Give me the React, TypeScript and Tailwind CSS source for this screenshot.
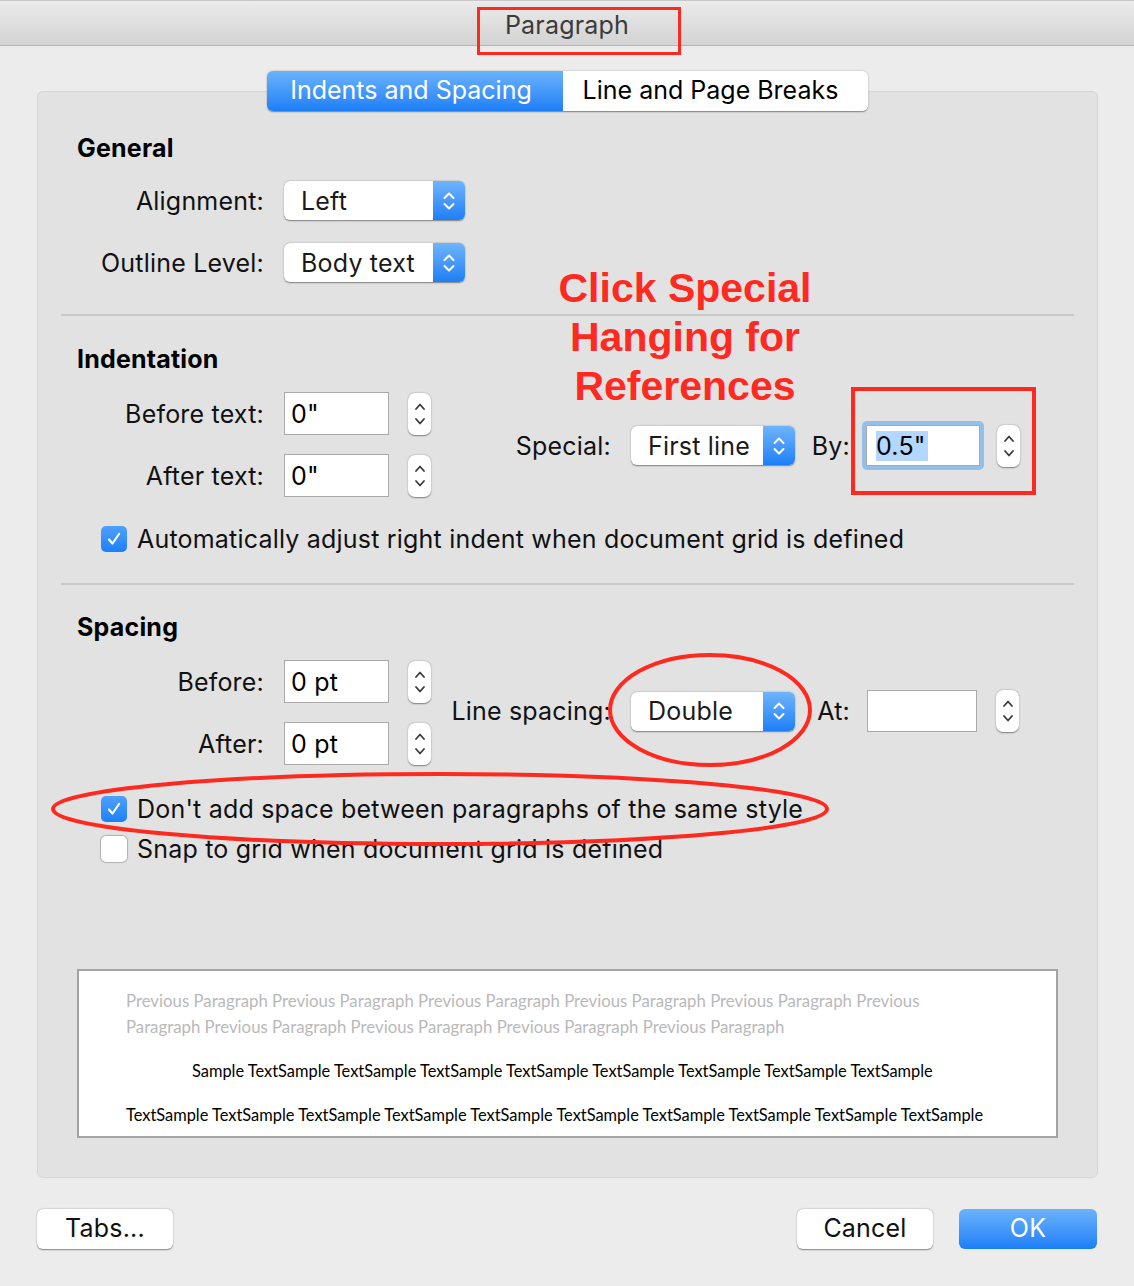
import React from "react";

const RED = "#ff2a1f";

function PopChevrons() {
  return (
    <svg width="14" height="24" viewBox="0 0 14 24" fill="none">
      <path d="M2.5 9 L7 4.5 L11.5 9" stroke="white" strokeWidth="2" strokeLinecap="round" strokeLinejoin="round" />
      <path d="M2.5 15 L7 19.5 L11.5 15" stroke="white" strokeWidth="2" strokeLinecap="round" strokeLinejoin="round" />
    </svg>
  );
}

function Popup({ value, width }: { value: string; width: string }) {
  return (
    <div className={`flex h-[39px] ${width} rounded-[6px] bg-white shadow-[0_0.5px_1.5px_rgba(0,0,0,0.45)] overflow-hidden`}>
      <div className="flex-1 flex items-center pl-[17px] text-[25px] leading-[30px] text-[#1a1a1a]">{value}</div>
      <div className="w-[32px] flex items-center justify-center bg-gradient-to-b from-[#6db4fb] to-[#1b7ef7]">
        <PopChevrons />
      </div>
    </div>
  );
}

function Stepper() {
  return (
    <div className="w-[23px] h-[42px] rounded-[7px] bg-white shadow-[0_0.5px_1.5px_rgba(0,0,0,0.45)] flex items-center justify-center">
      <svg width="12" height="30" viewBox="0 0 12 30" fill="none">
        <path d="M2 10 L6 5.5 L10 10" stroke="#3a3a3a" strokeWidth="1.8" strokeLinecap="round" strokeLinejoin="round" />
        <path d="M2 20 L6 24.5 L10 20" stroke="#3a3a3a" strokeWidth="1.8" strokeLinecap="round" strokeLinejoin="round" />
      </svg>
    </div>
  );
}

function Field({ value }: { value: string }) {
  return (
    <div className="w-[105px] h-[43px] bg-white border border-[#a9a9a9] flex items-center pl-[6px] text-[25px] leading-[30px] text-black">
      {value}
    </div>
  );
}

function FieldRow({ label, value }: { label: string; value: string }) {
  return (
    <div className="flex items-center">
      <div className="w-[226px] text-right text-[25px] leading-[30px] text-[#111] whitespace-nowrap">{label}</div>
      <div className="ml-[20px]">
        <Field value={value} />
      </div>
      <div className="ml-[19px]">
        <Stepper />
      </div>
    </div>
  );
}

function Checkbox({ checked }: { checked: boolean }) {
  return checked ? (
    <div className="w-[26px] h-[26px] rounded-[5px] bg-gradient-to-b from-[#4ea1fc] to-[#1a7ff8] flex items-center justify-center">
      <svg width="16" height="16" viewBox="0 0 16 16" fill="none">
        <path d="M3 8.5 L6.5 12.5 L13 3" stroke="white" strokeWidth="2.2" strokeLinecap="round" strokeLinejoin="round" />
      </svg>
    </div>
  ) : (
    <div className="w-[26px] h-[26px] rounded-[5px] bg-white shadow-[0_0_1px_1px_rgba(0,0,0,0.22)]" />
  );
}

function Button({ label, primary }: { label: string; primary?: boolean }) {
  return primary ? (
    <div className="w-[138px] h-[40px] rounded-[6px] bg-gradient-to-b from-[#6ab2fb] to-[#1a7ef7] flex items-center justify-center text-[25px] text-white">
      {label}
    </div>
  ) : (
    <div className="w-[136px] h-[40px] rounded-[6px] bg-white shadow-[0_0.5px_1.5px_rgba(0,0,0,0.45)] flex items-center justify-center text-[25px] text-[#111]">
      {label}
    </div>
  );
}

export default function App() {
  const prev1 = "Previous Paragraph Previous Paragraph Previous Paragraph Previous Paragraph Previous Paragraph Previous";
  const prev2 = "Paragraph Previous Paragraph Previous Paragraph Previous Paragraph Previous Paragraph";
  const s1 = "Sample " + Array(8).fill("TextSample").join(" ");
  const s2 = Array(10).fill("TextSample").join(" ");
  return (
    <div className="relative w-[1134px] h-[1286px] bg-[#ececec] font-['Inter','Liberation_Sans',Arial,sans-serif] tracking-[0.2px] overflow-hidden">
      {/* Title bar */}
      <div className="h-[46px] bg-gradient-to-b from-[#ebebeb] to-[#d3d3d3] border-b border-[#b4b4b4] border-t border-t-[#c8c8c8] flex items-center justify-center pt-[4px]">
        <span className="text-[25px] leading-[30px] text-[#3b3b3b]">Paragraph</span>
      </div>

      {/* Tabs */}
      <div className="relative z-10 mt-[25px] flex justify-center -mb-[20px]">
        <div className="ml-[1px] flex h-[40px] rounded-[6px] shadow-[0_0.5px_1.5px_rgba(0,0,0,0.45)] overflow-hidden">
          <div className="w-[296px] flex items-center justify-center pr-[8px] bg-gradient-to-b from-[#6ab2fb] to-[#1a7ef7] text-white text-[25px] tracking-normal">
            Indents and Spacing
          </div>
          <div className="w-[305px] flex items-center justify-center pr-[10px] bg-white text-black text-[25px] tracking-normal">
            Line and Page Breaks
          </div>
        </div>
      </div>

      {/* Panel */}
      <div className="ml-[37px] w-[1061px] h-[1087px] rounded-[6px] bg-[#e2e2e2] border border-[#d6d6d6] flex flex-col">
        <div className="mt-[41px] ml-[39px] text-[25px] font-bold text-black leading-[30px]">General</div>

        <div className="mt-[18px] flex items-center">
          <div className="w-[226px] text-right text-[25px] leading-[30px] text-[#111]">Alignment:</div>
          <div className="ml-[20px]">
            <Popup value="Left" width="w-[181px]" />
          </div>
        </div>
        <div className="mt-[23px] flex items-center">
          <div className="w-[226px] text-right text-[25px] leading-[30px] text-[#111] whitespace-nowrap">Outline Level:</div>
          <div className="ml-[20px]">
            <Popup value="Body text" width="w-[181px]" />
          </div>
        </div>

        <div className="mt-[32px] mx-[23px] h-[2px] bg-[#c9c9c9]" />

        <div className="mt-[28px] ml-[39px] text-[25px] font-bold text-black leading-[30px]">Indentation</div>

        <div className="mt-[18px] flex items-center">
          <div className="flex flex-col gap-[19px]">
            <FieldRow label="Before text:" value={'0"'} />
            <FieldRow label="After text:" value={'0"'} />
          </div>
          <div className="ml-[45px] mt-[2px] flex items-center">
            <span className="w-[135px] text-right text-[25px] leading-[30px] text-[#111]">Special:</span>
            <div className="ml-[20px]">
              <Popup value="First line" width="w-[164px]" />
            </div>
            <span className="w-[55px] text-right text-[25px] leading-[30px] text-[#111]">By:</span>
            <div className="ml-[12px] p-[4px] rounded-[5px] bg-[#93bfeb]">
              <div className="w-[114px] h-[41px] bg-white border border-[#a9a9a9] flex items-center pl-[9px]">
                <span className="text-[25px] leading-[30px] text-black bg-[#b3d7ff] pr-[2px]">0.5"</span>
              </div>
            </div>
            <div className="ml-[13px]">
              <Stepper />
            </div>
          </div>
        </div>

        <div className="mt-[27px] ml-[63px] flex items-center">
          <Checkbox checked />
          <span className="ml-[10px] text-[25px] leading-[30px] text-[#111] whitespace-nowrap">Automatically adjust right indent when document grid is defined</span>
        </div>

        <div className="mt-[29px] mx-[23px] h-[2px] bg-[#c9c9c9]" />

        <div className="mt-[27px] ml-[39px] text-[25px] font-bold text-black leading-[30px]">Spacing</div>

        <div className="mt-[18px] flex items-center">
          <div className="flex flex-col gap-[19px]">
            <FieldRow label="Before:" value="0 pt" />
            <FieldRow label="After:" value="0 pt" />
          </div>
          <div className="-mt-[3px] flex items-center">
            <span className="w-[180px] text-right text-[25px] leading-[30px] text-[#111] whitespace-nowrap">Line spacing:</span>
            <div className="ml-[20px]">
              <Popup value="Double" width="w-[164px]" />
            </div>
            <span className="w-[55px] text-right text-[25px] leading-[30px] text-[#111]">At:</span>
            <div className="ml-[17px] w-[110px] h-[42px] bg-white border border-[#a9a9a9]" />
            <div className="ml-[19px]">
              <Stepper />
            </div>
          </div>
        </div>

        <div className="mt-[29px] ml-[63px] flex items-center">
          <Checkbox checked />
          <span className="ml-[10px] text-[25px] leading-[30px] text-[#111] whitespace-nowrap">Don't add space between paragraphs of the same style</span>
        </div>
        <div className="mt-[10px] ml-[63px] flex items-center">
          <Checkbox checked={false} />
          <span className="ml-[10px] text-[25px] leading-[30px] text-[#111] whitespace-nowrap">Snap to grid when document grid is defined</span>
        </div>

        {/* Preview */}
        <div className="mt-[105px] ml-[39px] w-[981px] h-[169px] bg-white border-2 border-[#a3a3a3] font-['Lato',sans-serif] tracking-normal whitespace-nowrap">
          <div className="mt-[17px] ml-[47px] text-[#b9b9b9] text-[16.8px] leading-[26px]">
            <div>{prev1}</div>
            <div>{prev2}</div>
          </div>
          <div className="mt-[21px] ml-[113px] text-black text-[16.4px] leading-[20px]">{s1}</div>
          <div className="mt-[24px] ml-[47px] text-black text-[16.4px] leading-[20px]">{s2}</div>
        </div>
      </div>

      {/* Buttons */}
      <div className="mt-[31px] px-[37px] flex items-center">
        <Button label="Tabs..." />
        <div className="flex-1" />
        <Button label="Cancel" />
        <div className="ml-[26px]">
          <Button label="OK" primary />
        </div>
      </div>

      {/* Annotation overlays */}
      <div className="absolute left-[477px] top-[7px] w-[204px] h-[48px] border-[3px] border-[#ff2a1f]" />
      <div className="absolute left-[851px] top-[387px] w-[185px] h-[108px] border-[4px] border-[#ff2a1f]" />
      <div className="absolute left-[515px] top-[264px] w-[340px] text-center font-['Liberation_Sans',Arial,sans-serif] tracking-normal font-bold text-[41px] leading-[49px] text-[#ff2a1f]">
        Click Special
        <br />
        Hanging for
        <br />
        References
      </div>
      <svg className="absolute left-0 top-0 pointer-events-none" width="1134" height="1286" viewBox="0 0 1134 1286" fill="none">
        <ellipse cx="710" cy="710" rx="100" ry="55" stroke={RED} strokeWidth="4" />
        <ellipse cx="440" cy="809" rx="387" ry="35" stroke={RED} strokeWidth="4" />
      </svg>
    </div>
  );
}
